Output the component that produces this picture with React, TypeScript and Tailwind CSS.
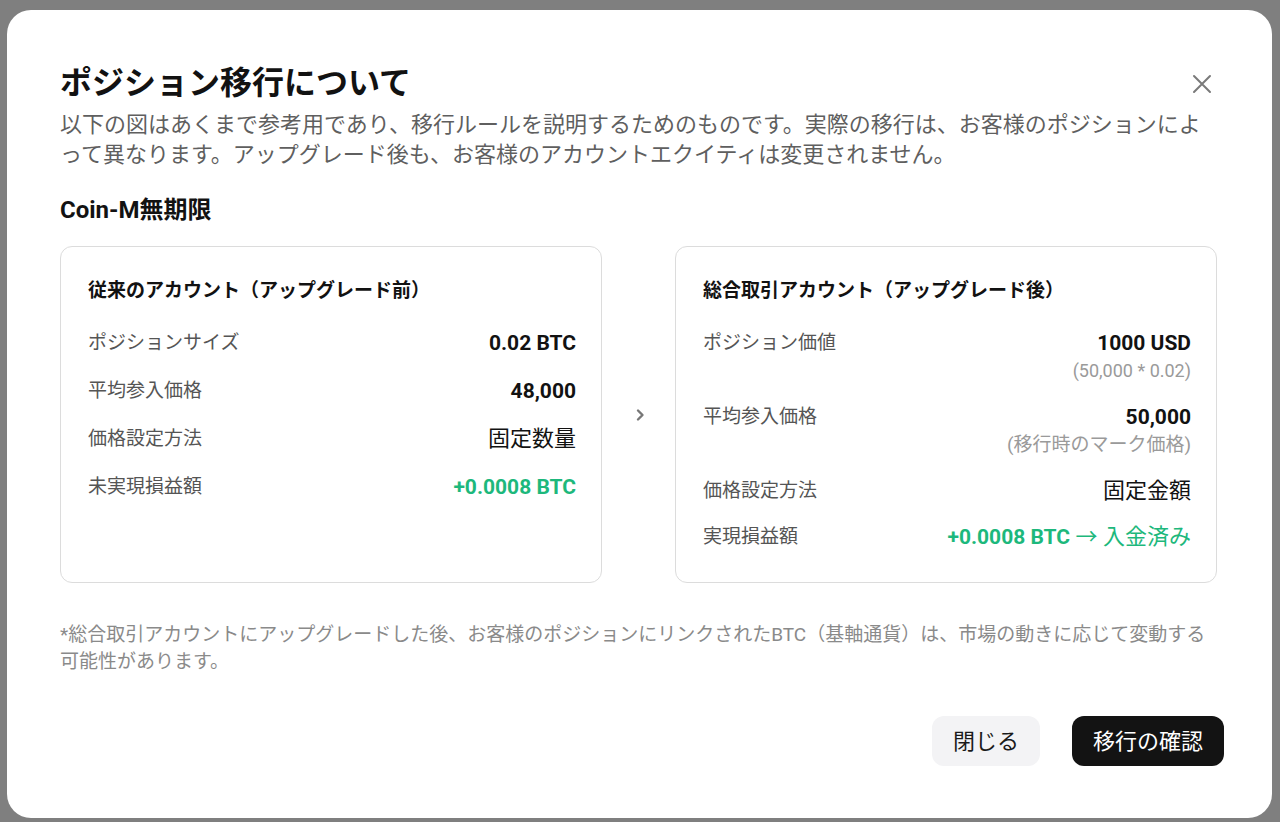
import React from "react";

const font = { fontFamily: 'Roboto, "Noto Sans CJK JP", "Noto Sans", sans-serif' };

function Row({ label, value, sub, valueClass = "text-[21px] font-bold text-[#121212]", subClass = "text-[18px]" }: { label: string; value: React.ReactNode; sub?: string; valueClass?: string; subClass?: string }) {
  return (
    <div className="flex justify-between items-start">
      <div className="text-[19px] leading-[28px] text-[#555]">{label}</div>
      <div className="flex flex-col items-end">
        <div className={`leading-[28px] ${valueClass}`}>{value}</div>
        {sub && <div className={`leading-[28px] text-[#9a9a9a] ${subClass}`}>{sub}</div>}
      </div>
    </div>
  );
}

export default function App() {
  return (
    <div className="w-[1280px] h-[822px] bg-[#7f7f7f] pt-[10px] pl-[7px] overflow-hidden" style={font}>
      <div className="w-[1265px] h-[808px] bg-white rounded-[24px] pt-[53px] pl-[53px] pr-[55px] flex flex-col">
        <div className="flex items-center justify-between h-[40px]">
          <h1 className="text-[32px] leading-[40px] font-bold text-[#121212]">ポジション移行について</h1>
          <button className="w-[24px] h-[24px] flex items-center justify-center mr-[3px] mt-[2px]">
            <svg width="20" height="20" viewBox="0 0 20 20" fill="none" stroke="#7a7a7a" strokeWidth="2" strokeLinecap="round">
              <path d="M2 2 L18 18 M18 2 L2 18" />
            </svg>
          </button>
        </div>
        <p className="mt-[7px] text-[22px] leading-[30px] text-[#5f5f5f]">
          以下の図はあくまで参考用であり、移行ルールを説明するためのものです。実際の移行は、お客様のポジションによって異なります。アップグレード後も、お客様のアカウントエクイティは変更されません。
        </p>
        <h2 className="mt-[25px] text-[24px] leading-[30px] font-bold text-[#121212]">Coin-M無期限</h2>
        <div className="mt-[21px] flex items-stretch h-[337px]">
          <div className="w-[542px] border border-[#dcdcdc] rounded-[12px] pt-[30px] pl-[27px] pr-[25px]">
            <div className="text-[19px] leading-[28px] font-bold text-[#121212]">従来のアカウント（アップグレード前）</div>
            <div className="mt-[24px] flex flex-col gap-[20px]">
              <Row label="ポジションサイズ" value="0.02 BTC" />
              <Row label="平均参入価格" value="48,000" />
              <Row label="価格設定方法" value="固定数量" valueClass="text-[22px] text-[#121212]" />
              <Row label="未実現損益額" value="+0.0008 BTC" valueClass="text-[21px] font-bold text-[#1db87c]" />
            </div>
          </div>
          <div className="w-[73px] flex items-center justify-center">
            <svg width="10" height="14" viewBox="0 0 10 14" fill="none" stroke="#777" strokeWidth="2.4" strokeLinecap="round" strokeLinejoin="round" className="ml-[2px]">
              <path d="M3 2.5 L7.5 7 L3 11.5" />
            </svg>
          </div>
          <div className="w-[542px] border border-[#dcdcdc] rounded-[12px] pt-[30px] pl-[27px] pr-[25px]">
            <div className="text-[19px] leading-[28px] font-bold text-[#121212]">総合取引アカウント（アップグレード後）</div>
            <div className="mt-[24px] flex flex-col gap-[18px]">
              <Row label="ポジション価値" value="1000 USD" sub="(50,000 * 0.02)" />
              <Row label="平均参入価格" value="50,000" sub="(移行時のマーク価格)" subClass="text-[19px]" />
              <Row label="価格設定方法" value="固定金額" valueClass="text-[22px] text-[#121212]" />
              <Row
                label="実現損益額"
                value={
                  <span className="text-[#1db87c]">
                    <span className="font-bold text-[21px]">+0.0008 BTC</span>
                    <span className="text-[22px]"> → 入金済み</span>
                  </span>
                }
                valueClass=""
              />
            </div>
          </div>
        </div>
        <p className="mt-[38px] text-[19px] leading-[27px] text-[#8a8a8a]">
          *総合取引アカウントにアップグレードした後、お客様のポジションにリンクされたBTC（基軸通貨）は、市場の動きに応じて変動する可能性があります。
        </p>
        <div className="mt-[41px] flex justify-end gap-[32px] mr-[-7px]">
          <button className="h-[50px] w-[108px] rounded-[12px] bg-[#f3f3f5] text-[22px] text-[#1a1a1a]">閉じる</button>
          <button className="h-[50px] w-[152px] rounded-[12px] bg-[#131313] text-[22px] text-white">移行の確認</button>
        </div>
      </div>
    </div>
  );
}
